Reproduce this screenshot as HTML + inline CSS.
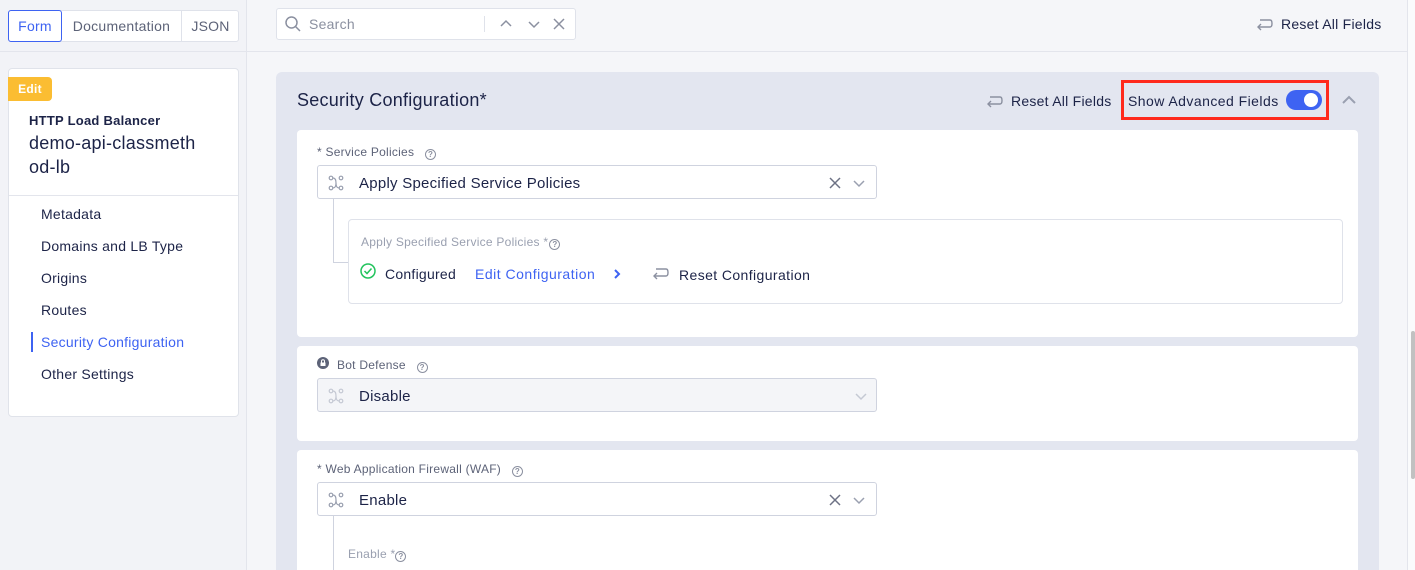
<!DOCTYPE html>
<html style="overflow:hidden;height:570px"><head><meta charset="utf-8"><style>
*{box-sizing:border-box;margin:0;padding:0}
body{width:1415px;height:570px;overflow:hidden;background:#f5f6f9;font-family:"Liberation Sans",sans-serif;color:#1c2347;position:relative;letter-spacing:0.25px}
.a{position:absolute}
.t{white-space:nowrap}
.lbl{font-size:12px;color:#5d6378}
.sel{position:absolute;left:317px;width:560px;height:34px;border:1px solid #cfd3df;border-radius:3px;background:#fff}
.sel .tx{position:absolute;left:41px;top:9px;font-size:15px;color:#1c2347}
.q{display:inline-block;width:11px;height:11px;border:1.3px solid #8b90a0;border-radius:50%;font-size:8px;line-height:9px;text-align:center;color:#8b90a0;font-weight:bold;vertical-align:-1px;letter-spacing:0}
</style></head><body>
<div class="a" style="left:0;top:0;width:247px;height:570px;background:#f2f3f7;border-right:1px solid #e3e5ec"></div>
<div class="a" style="left:0;top:51px;width:1407px;height:1px;background:#e3e5ec"></div>
<div class="a" style="left:248px;top:0;width:1159px;height:51px;background:#f5f6f9"></div>
<div class="a" style="left:8px;top:10px;width:231px;height:32px;border:1px solid #dfe2ea;border-radius:3px;background:#fff"></div>
<div class="a t" style="left:8px;top:10px;width:54px;height:32px;border:1px solid #3e63f2;border-radius:3px;color:#3e63f2;font-size:14px;text-align:center;line-height:30px">Form</div>
<div class="a t" style="left:62px;top:10px;width:120px;height:32px;border-right:1px solid #dfe2ea;color:#5d6378;font-size:14px;text-align:center;line-height:32px">Documentation</div>
<div class="a t" style="left:182px;top:10px;width:57px;height:32px;color:#5d6378;font-size:14px;text-align:center;line-height:32px">JSON</div>
<div class="a" style="left:8px;top:68px;width:231px;height:349px;background:#fff;border:1px solid #e0e3ea;border-radius:4px"></div>
<div class="a t" style="left:8px;top:77px;width:44px;height:24px;background:#fbbd32;border-radius:0 4px 4px 0;color:#fff;font-size:12px;font-weight:bold;line-height:24px;text-align:center">Edit</div>
<div class="a t" style="left:29px;top:113px;font-size:13px;font-weight:bold">HTTP Load Balancer</div>
<div class="a" style="left:29px;top:131px;font-size:18px;line-height:24px;width:200px">demo-api-classmeth<br>od-lb</div>
<div class="a" style="left:9px;top:195px;width:229px;height:1px;background:#e3e5ec"></div>
<div class="a t" style="left:41px;top:206px;font-size:14px">Metadata</div>
<div class="a t" style="left:41px;top:238px;font-size:14px">Domains and LB Type</div>
<div class="a t" style="left:41px;top:270px;font-size:14px">Origins</div>
<div class="a t" style="left:41px;top:302px;font-size:14px">Routes</div>
<div class="a" style="left:31px;top:332px;width:2px;height:20px;background:#3e63f2"></div>
<div class="a t" style="left:41px;top:334px;font-size:14px;color:#3e63f2">Security Configuration</div>
<div class="a t" style="left:41px;top:366px;font-size:14px">Other Settings</div>
<div class="a" style="left:276px;top:8px;width:300px;height:32px;background:#fff;border:1px solid #dfe2ea;border-radius:3px"></div>
<svg class="a" style="left:284px;top:15px" width="18" height="18" viewBox="0 0 18 18" fill="none" stroke="#8b90a0" stroke-width="1.5"><circle cx="7.5" cy="7.5" r="5.5"/><path d="M11.5 11.5L16 16"/></svg>
<div class="a t" style="left:309px;top:16px;font-size:14px;color:#8b90a0">Search</div>
<div class="a" style="left:484px;top:16px;width:1px;height:16px;background:#dfe2ea"></div>
<svg class="a" style="left:498px;top:17px" width="70" height="14" viewBox="0 0 70 14" fill="none" stroke="#8b90a0" stroke-width="1.5"><path d="M3 9L8 4L13 9"/><path d="M31 5L36 10L41 5"/><path d="M56 2L66 12M66 2L56 12"/></svg>
<svg class="a" style="left:1256px;top:15px" width="18" height="16" viewBox="0 0 18 16" fill="none" stroke="#8b90a0" stroke-width="1.4"><path d="M5 9L2 12L5 15"/><path d="M2 12H14Q16 12 16 8.5Q16 5 14 5H4"/></svg>
<div class="a t" style="left:1281px;top:16px;font-size:14px">Reset All Fields</div>
<div class="a" style="left:1407px;top:0;width:8px;height:570px;background:#fafbfc;border-left:1px solid #e3e5ec"></div>
<div class="a" style="left:1411px;top:331px;width:4px;height:148px;background:#c1c1c1;border-radius:2px"></div>
<div class="a" style="left:276px;top:72px;width:1103px;height:498px;background:#e3e6f0;border-radius:6px 6px 0 0"></div>
<div class="a t" style="left:297px;top:90px;font-size:18px">Security Configuration*</div>
<svg class="a" style="left:986px;top:92px" width="18" height="16" viewBox="0 0 18 16" fill="none" stroke="#8b90a0" stroke-width="1.4"><path d="M5 9L2 12L5 15"/><path d="M2 12H14Q16 12 16 8.5Q16 5 14 5H4"/></svg>
<div class="a t" style="left:1011px;top:93px;font-size:14px">Reset All Fields</div>
<div class="a" style="left:1121px;top:80px;width:208px;height:40px;border:3px solid #ff2a1d"></div>
<div class="a t" style="left:1128px;top:93px;font-size:14px;letter-spacing:0.45px">Show Advanced Fields</div>
<div class="a" style="left:1286px;top:90px;width:36px;height:20px;background:#3e63f2;border-radius:10px"></div>
<div class="a" style="left:1304px;top:93px;width:14px;height:14px;background:#fff;border-radius:50%"></div>
<svg class="a" style="left:1341px;top:94px" width="16" height="12" viewBox="0 0 16 12" fill="none" stroke="#9aa0b0" stroke-width="2"><path d="M2 9L8 3L14 9"/></svg>
<div class="a" style="left:297px;top:130px;width:1061px;height:207px;background:#fff;border-radius:4px"></div>
<div class="a t lbl" style="left:317px;top:145px">* Service Policies &nbsp;&nbsp;<span class="q">?</span></div>
<div class="sel" style="top:165px"><svg class="a" style="left:10px;top:9px" width="16" height="16" viewBox="0 0 16 16" fill="none" stroke="#9aa0b0" stroke-width="1.2"><circle cx="3" cy="3" r="1.8"/><circle cx="3" cy="13" r="1.8"/><circle cx="13" cy="3" r="1.8"/><circle cx="13" cy="13" r="1.8"/><path d="M5 3Q8 3 8 8Q8 13 11 13M5 13Q8 13 8 8"/></svg><div class="tx">Apply Specified Service Policies</div>
<svg class="a" style="left:510px;top:10px" width="40" height="14" viewBox="0 0 40 14" fill="none" stroke="#6d7285" stroke-width="1.5"><path d="M2 2L12 12M12 2L2 12"/><path d="M26 5L31 10L36 5" stroke="#9aa0b0"/></svg></div>
<div class="a" style="left:333px;top:199px;width:1px;height:63px;background:#cfd3df"></div>
<div class="a" style="left:333px;top:262px;width:15px;height:1px;background:#cfd3df"></div>
<div class="a" style="left:348px;top:219px;width:995px;height:85px;border:1px solid #dfe2ea;border-radius:4px"></div>
<div class="a t" style="left:361px;top:235px;font-size:12px;color:#9aa0b0">Apply Specified Service Policies *<span class="q" style="margin-left:1px">?</span></div>
<svg class="a" style="left:360px;top:263px" width="16" height="16" viewBox="0 0 16 16" fill="none" stroke="#21c35c" stroke-width="1.5"><circle cx="8" cy="8" r="7"/><path d="M4.5 8L7 10.5L11.5 5.5"/></svg>
<div class="a t" style="left:385px;top:266px;font-size:14px">Configured</div>
<div class="a t" style="left:475px;top:266px;font-size:14px;color:#3e63f2;letter-spacing:0.5px">Edit Configuration</div>
<svg class="a" style="left:612px;top:268px" width="10" height="12" viewBox="0 0 10 12" fill="none" stroke="#3e63f2" stroke-width="2"><path d="M3 2L7 6L3 10"/></svg>
<svg class="a" style="left:652px;top:264px" width="18" height="16" viewBox="0 0 18 16" fill="none" stroke="#8b90a0" stroke-width="1.4"><path d="M5 9L2 12L5 15"/><path d="M2 12H14Q16 12 16 8.5Q16 5 14 5H4"/></svg>
<div class="a t" style="left:679px;top:267px;font-size:14px;letter-spacing:0.4px">Reset Configuration</div>
<div class="a" style="left:297px;top:346px;width:1061px;height:95px;background:#fff;border-radius:4px"></div>
<svg class="a" style="left:317px;top:357px" width="12" height="12" viewBox="0 0 12 12"><circle cx="6" cy="6" r="6" fill="#5d6378"/><rect x="3.5" y="5.5" width="5" height="3.5" fill="#fff"/><path d="M4.5 5.5V4.3A1.5 1.5 0 0 1 7.5 4.3V5.5" fill="none" stroke="#fff" stroke-width="1"/></svg>
<div class="a t lbl" style="left:337px;top:358px">Bot Defense &nbsp;&nbsp;<span class="q">?</span></div>
<div class="sel" style="top:378px;background:#f4f5f8"><svg class="a" style="left:10px;top:9px" width="16" height="16" viewBox="0 0 16 16" fill="none" stroke="#c5c9d4" stroke-width="1.2"><circle cx="3" cy="3" r="1.8"/><circle cx="3" cy="13" r="1.8"/><circle cx="13" cy="3" r="1.8"/><circle cx="13" cy="13" r="1.8"/><path d="M5 3Q8 3 8 8Q8 13 11 13M5 13Q8 13 8 8"/></svg><div class="tx">Disable</div>
<svg class="a" style="left:536px;top:10px" width="14" height="14" viewBox="0 0 14 14" fill="none" stroke="#c5c9d4" stroke-width="1.5"><path d="M2 5L7 10L12 5"/></svg></div>
<div class="a" style="left:297px;top:450px;width:1061px;height:120px;background:#fff;border-radius:4px 4px 0 0"></div>
<div class="a t lbl" style="left:317px;top:462px">* Web Application Firewall (WAF) &nbsp;&nbsp;<span class="q">?</span></div>
<div class="sel" style="top:482px"><svg class="a" style="left:10px;top:9px" width="16" height="16" viewBox="0 0 16 16" fill="none" stroke="#9aa0b0" stroke-width="1.2"><circle cx="3" cy="3" r="1.8"/><circle cx="3" cy="13" r="1.8"/><circle cx="13" cy="3" r="1.8"/><circle cx="13" cy="13" r="1.8"/><path d="M5 3Q8 3 8 8Q8 13 11 13M5 13Q8 13 8 8"/></svg><div class="tx">Enable</div>
<svg class="a" style="left:510px;top:10px" width="40" height="14" viewBox="0 0 40 14" fill="none" stroke="#6d7285" stroke-width="1.5"><path d="M2 2L12 12M12 2L2 12"/><path d="M26 5L31 10L36 5" stroke="#9aa0b0"/></svg></div>
<div class="a" style="left:333px;top:516px;width:1px;height:54px;background:#cfd3df"></div>
<div class="a t" style="left:348px;top:547px;font-size:12px;color:#9aa0b0">Enable *<span class="q">?</span></div>
</body></html>
